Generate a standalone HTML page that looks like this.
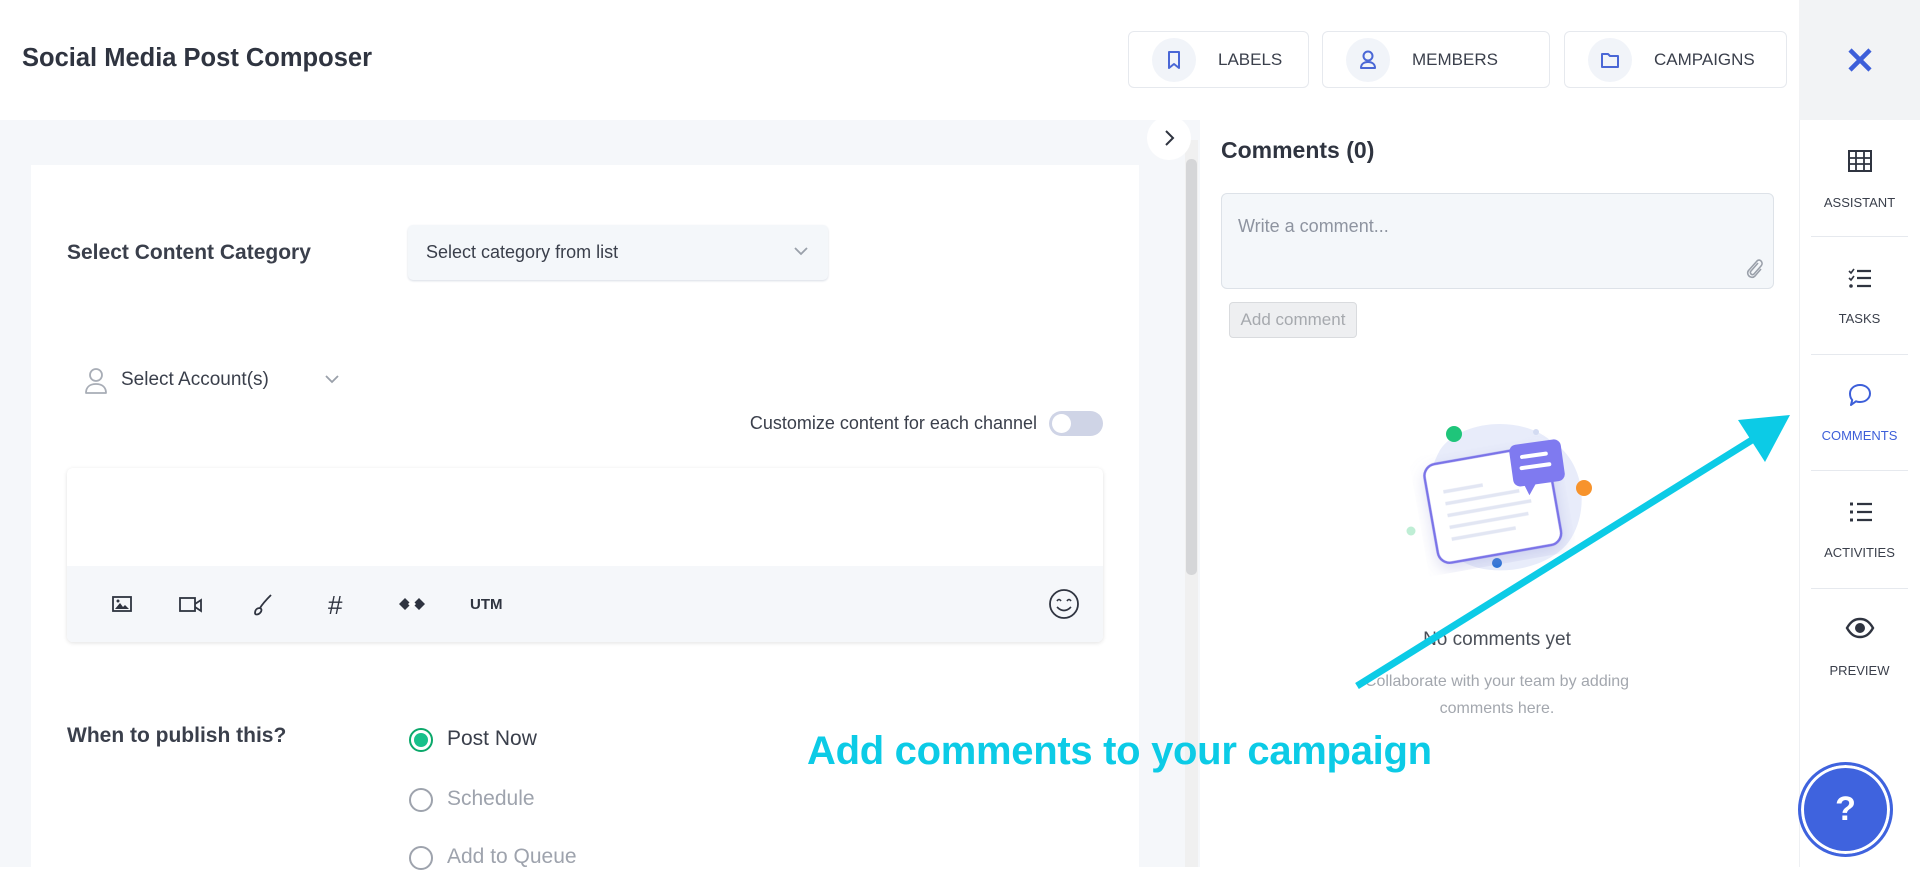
<!DOCTYPE html>
<html><head><meta charset="utf-8"><style>
*{box-sizing:border-box;margin:0;padding:0}
body{width:1920px;height:867px;overflow:hidden;background:#fff;font-family:"Liberation Sans",sans-serif;position:relative;color:#3a3f4b}
.abs{position:absolute}
.btn{position:absolute;top:31px;height:57px;border:1px solid #e6e9ee;border-radius:6px;background:#fff;display:flex;align-items:center;font-size:17px;color:#3a3f4b}
.btn .ic{width:44px;height:44px;border-radius:50%;background:#f1f4f9;margin-left:23px;margin-right:22px;display:flex;align-items:center;justify-content:center}
.side{position:absolute;left:1799px;width:121px;text-align:center;font-size:13px;color:#3a3f4b}
.div{position:absolute;left:1811px;width:97px;height:1px;background:#e6e9ee}
.tb{position:absolute;top:592px}
</style></head><body>
<div class="abs" style="left:22px;top:44px;font-size:25.5px;font-weight:bold;color:#2f3440">Social Media Post Composer</div>
<div class="btn" style="left:1128px;width:181px"><div class="ic"><svg width="20" height="22" viewBox="0 0 20 22"><path d="M5 3h10v16l-5-4-5 4z" fill="none" stroke="#4a67d6" stroke-width="2" stroke-linejoin="round"/></svg></div>LABELS</div>
<div class="btn" style="left:1322px;width:228px"><div class="ic"><svg width="22" height="24" viewBox="0 0 22 24"><circle cx="11" cy="8" r="4.5" fill="none" stroke="#4a67d6" stroke-width="2"/><path d="M4 20c0-4 3-6 7-6s7 2 7 6z" fill="none" stroke="#4a67d6" stroke-width="2" stroke-linejoin="round"/></svg></div>MEMBERS</div>
<div class="btn" style="left:1564px;width:223px"><div class="ic"><svg width="22" height="20" viewBox="0 0 22 20"><path d="M3 4h6l2 2h8v11H3z" fill="none" stroke="#4a67d6" stroke-width="2" stroke-linejoin="round"/></svg></div>CAMPAIGNS</div>
<div class="abs" style="left:1799px;top:0;width:121px;height:120px;background:#f2f3f5"></div>
<svg class="abs" style="left:1847px;top:47px" width="26" height="26" viewBox="0 0 26 26"><path d="M3 3L23 23M23 3L3 23" stroke="#3d5fd9" stroke-width="4.5"/></svg>
<div class="abs" style="left:0;top:120px;width:1200px;height:747px;background:#f5f7fa"></div>
<div class="abs" style="left:1185px;top:140px;width:13px;height:727px;background:#f0f0f0"></div>
<div class="abs" style="left:1186px;top:159px;width:11px;height:416px;background:#d5d6d8;border-radius:5px"></div>
<div class="abs" style="left:31px;top:165px;width:1108px;height:702px;background:#fff"></div>
<div class="abs" style="left:1147px;top:116px;width:44px;height:44px;border-radius:50%;background:#fff"></div>
<svg class="abs" style="left:1161px;top:128px" width="16" height="20" viewBox="0 0 16 20"><path d="M5 3l7 7-7 7" fill="none" stroke="#2f3440" stroke-width="2"/></svg>
<div class="abs" style="left:67px;top:241px;font-size:21px;font-weight:bold;color:#3a3f4b">Select Content Category</div>
<div class="abs" style="left:408px;top:225px;width:420px;height:55px;background:#f4f7fa;border-radius:5px;box-shadow:0 1px 2px #d8dde5"></div>
<div class="abs" style="left:426px;top:242px;font-size:18px;color:#3a3f4b">Select category from list</div>
<svg class="abs" style="left:792px;top:245px" width="18" height="12" viewBox="0 0 18 12"><path d="M3 3l6 6 6-6" fill="none" stroke="#9aa0aa" stroke-width="1.8"/></svg>
<svg class="abs" style="left:83px;top:366px" width="26" height="30" viewBox="0 0 26 30"><circle cx="13" cy="9" r="6" fill="none" stroke="#a8adb6" stroke-width="1.8"/><path d="M3 27c0-6 4-9 10-9s10 3 10 9z" fill="none" stroke="#a8adb6" stroke-width="1.8" stroke-linejoin="round"/></svg>
<div class="abs" style="left:121px;top:369px;font-size:19px;color:#3a3f4b">Select Account(s)</div>
<svg class="abs" style="left:323px;top:373px" width="18" height="12" viewBox="0 0 18 12"><path d="M3 3l6 6 6-6" fill="none" stroke="#9aa0aa" stroke-width="1.8"/></svg>
<div class="abs" style="left:700px;top:413px;width:337px;text-align:right;font-size:18px;color:#3a3f4b">Customize content for each channel</div>
<div class="abs" style="left:1049px;top:411px;width:54px;height:25px;border-radius:13px;background:#cfd4e6"></div>
<div class="abs" style="left:1052px;top:414px;width:19px;height:19px;border-radius:50%;background:#fff"></div>
<div class="abs" style="left:67px;top:468px;width:1036px;height:174px;background:#fff;border-radius:6px;box-shadow:0 1px 4px rgba(0,0,0,.12);overflow:hidden"><div style="position:absolute;left:0;top:98px;width:100%;height:76px;background:#f5f7fa"></div></div>
<svg class="tb" style="left:110px" width="24" height="24" viewBox="0 0 24 24"><rect x="3" y="5" width="18" height="14" fill="none" stroke="#2f3440" stroke-width="1.8"/><path d="M5 17l5-6 3 4 2-2 4 4z" fill="#2f3440"/><circle cx="8" cy="9" r="1.5" fill="#2f3440"/></svg>
<svg class="tb" style="left:178px" width="26" height="24" viewBox="0 0 26 24"><rect x="2" y="6" width="15" height="13" fill="none" stroke="#2f3440" stroke-width="1.8"/><path d="M17 12l6-4v11l-6-4" fill="none" stroke="#2f3440" stroke-width="1.8"/></svg>
<svg class="tb" style="left:251px" width="24" height="26" viewBox="0 0 24 26"><path d="M20 3c-3 3-8 8-11 13M9 16c-3 0-5 2-5 5 0 2 3 2 5 0 2-2 2-4 0-5z" fill="none" stroke="#2f3440" stroke-width="1.8"/></svg>
<div class="tb abs" style="left:328px;top:590px;font-size:26px;color:#2f3440">#</div>
<svg class="tb" style="left:398px" width="28" height="24" viewBox="0 0 28 24"><path d="M1 12l6-6 6 6-6 6zM15 12l6-6 6 6-6 6z" fill="#2f3440"/><path d="M10 12l4-4 4 4-4 4z" fill="#fff"/></svg>
<div class="abs" style="left:470px;top:596px;font-size:15px;font-weight:bold;color:#2f3440">UTM</div>
<svg class="abs" style="left:1047px;top:587px" width="34" height="34" viewBox="0 0 34 34"><circle cx="17" cy="17" r="14" fill="none" stroke="#2f3440" stroke-width="1.8"/><path d="M10 14q2-3 4 0M20 14q2-3 4 0M10 20q7 7 14 0" fill="none" stroke="#2f3440" stroke-width="1.6"/></svg>
<div class="abs" style="left:67px;top:724px;font-size:21px;font-weight:bold;color:#3a3f4b">When to publish this?</div>
<div class="abs" style="left:409px;top:728px;width:24px;height:24px;border-radius:50%;border:2px solid #0aa86a;background:#fff"><div style="margin:3px;width:14px;height:14px;border-radius:50%;background:#17c08a"></div></div>
<div class="abs" style="left:447px;top:727px;font-size:21px;color:#3a3f4b">Post Now</div>
<div class="abs" style="left:409px;top:788px;width:24px;height:24px;border-radius:50%;border:2px solid #9ea3ad"></div>
<div class="abs" style="left:447px;top:787px;font-size:21px;color:#9ea3ad">Schedule</div>
<div class="abs" style="left:409px;top:846px;width:24px;height:24px;border-radius:50%;border:2px solid #9ea3ad"></div>
<div class="abs" style="left:447px;top:845px;font-size:21px;color:#9ea3ad">Add to Queue</div>
<div class="abs" style="left:1221px;top:137px;font-size:23px;font-weight:bold;color:#2f3440">Comments (0)</div>
<div class="abs" style="left:1221px;top:193px;width:553px;height:96px;background:#f4f7fa;border:1.5px solid #dde2e8;border-radius:6px"></div>
<div class="abs" style="left:1238px;top:216px;font-size:18px;color:#8e94a0">Write a comment...</div>
<svg class="abs" style="left:1744px;top:256px" width="20" height="24" viewBox="0 0 20 24"><path d="M14 7l-7 8c-2 2 1 5 3 3l7-8c3-3-1-8-4-5l-8 9c-4 4 2 10 6 6l6-7" fill="none" stroke="#9aa0aa" stroke-width="1.6"/></svg>
<div class="abs" style="left:1229px;top:302px;width:128px;height:36px;background:#eeeff1;border:1px solid #d9dbde;border-radius:4px;font-size:17px;color:#a6a9ae;text-align:center;line-height:34px">Add comment</div>
<svg class="abs" style="left:1400px;top:400px" width="240" height="190" viewBox="0 0 240 190">
<defs><filter id="sh"><feDropShadow dx="0" dy="6" stdDeviation="8" flood-color="#8a90d0" flood-opacity=".3"/></filter></defs>
<path d="M40 50C60 20 120 15 150 40C185 60 190 110 170 140C150 170 90 180 60 160C25 140 20 85 40 50z" fill="#e8ecfa"/>
<circle cx="54" cy="34" r="8" fill="#1fc57a"/><circle cx="136" cy="32" r="3" fill="#d3dbf2"/><circle cx="184" cy="88" r="8" fill="#f7932c"/><circle cx="11" cy="131" r="4.5" fill="#bfeed5"/><circle cx="97" cy="163" r="5" fill="#2f74d6"/>
<g transform="rotate(-10 90 103)" filter="url(#sh)"><rect x="30" y="55" width="125" height="100" rx="12" fill="#fff" stroke="#7a73e8" stroke-width="2.5"/>
<path d="M46 84h40M46 96h75M46 108h85M46 120h80M46 132h65" stroke="#e2e6f3" stroke-width="3.5"/></g>
<g transform="rotate(-8 137 70)"><rect x="112" y="42" width="52" height="42" rx="7" fill="#7f7af0"/><path d="M122 82l4 12 9-12z" fill="#7f7af0"/><path d="M124 55h24M122 66h28" stroke="#fff" stroke-width="4" stroke-linecap="round"/></g>
</svg>
<div class="abs" style="left:1297px;top:629px;width:400px;text-align:center;font-size:19px;color:#4a4f58">No comments yet</div>
<div class="abs" style="left:1297px;top:668px;width:400px;text-align:center;font-size:16px;line-height:27px;color:#a3a7ae">Collaborate with your team by adding<br>comments here.</div>
<div class="abs" style="left:1799px;top:120px;width:1px;height:747px;background:#eef0f3"></div>
<svg class="abs" style="left:1847px;top:149px" width="26" height="24" viewBox="0 0 26 24"><rect x="2" y="2" width="22" height="20" fill="none" stroke="#2f3440" stroke-width="2"/><path d="M2 9h22M2 15h22M9 2v20M17 2v20" stroke="#2f3440" stroke-width="1.8"/></svg>
<div class="side" style="top:195px">ASSISTANT</div>
<div class="div" style="top:236px"></div>
<svg class="abs" style="left:1847px;top:266px" width="26" height="24" viewBox="0 0 26 24"><path d="M2 5l2 2 3-4M2 12l2 2 3-4" fill="none" stroke="#2f3440" stroke-width="1.6"/><circle cx="4" cy="20" r="1.8" fill="#2f3440"/><path d="M10 5h14M10 12h14M10 20h14" stroke="#2f3440" stroke-width="2.2"/></svg>
<div class="side" style="top:311px">TASKS</div>
<div class="div" style="top:354px"></div>
<svg class="abs" style="left:1847px;top:382px" width="26" height="26" viewBox="0 0 26 26"><path d="M13 3c6 0 10 4 10 8.5S19 20 13 20c-1.5 0-3-.3-4-.7L4 23l1.2-5C3.8 16.5 3 14 3 11.5 3 7 7 3 13 3z" fill="none" stroke="#3d5fd9" stroke-width="2" stroke-linejoin="round"/></svg>
<div class="side" style="top:428px;color:#3d5fd9">COMMENTS</div>
<div class="div" style="top:470px"></div>
<svg class="abs" style="left:1848px;top:500px" width="26" height="24" viewBox="0 0 26 24"><path d="M2 4h3M2 12h3M2 20h3" stroke="#2f3440" stroke-width="3"/><path d="M9 4h15M9 12h15M9 20h15" stroke="#2f3440" stroke-width="2.2"/></svg>
<div class="side" style="top:545px">ACTIVITIES</div>
<div class="div" style="top:588px"></div>
<svg class="abs" style="left:1845px;top:617px" width="30" height="22" viewBox="0 0 30 22"><path d="M2 11C6 4 10 2 15 2s9 2 13 9c-4 7-8 9-13 9S6 18 2 11z" fill="none" stroke="#2f3440" stroke-width="2.4"/><circle cx="15" cy="11" r="5" fill="#2f3440"/></svg>
<div class="side" style="top:663px">PREVIEW</div>
<div class="abs" style="left:1798px;top:762px;width:95px;height:95px;border-radius:50%;background:#3f63de;border:3px solid #3f63de;box-shadow:inset 0 0 0 3px #fff;display:flex;align-items:center;justify-content:center;color:#fff;font-size:34px;font-weight:bold">?</div>
<div class="abs" style="left:807px;top:729px;font-size:40px;font-weight:bold;color:#0ccbe6;white-space:nowrap;letter-spacing:-0.3px">Add comments to your campaign</div>
<svg class="abs" style="left:0;top:0" width="1920" height="867" viewBox="0 0 1920 867"><path d="M1357 686L1760 435" stroke="#0ccbe6" stroke-width="7"/><path d="M1790 415L1738 420L1765 462z" fill="#0ccbe6"/></svg>
</body></html>
